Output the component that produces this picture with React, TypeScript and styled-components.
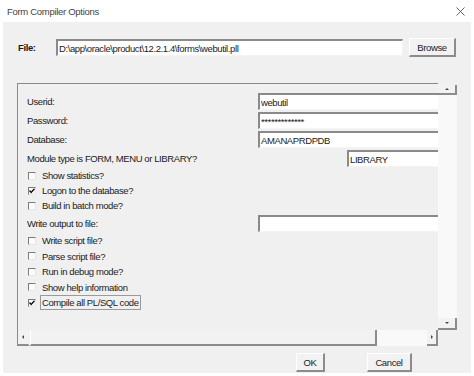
import React from 'react';
import styled, { createGlobalStyle } from 'styled-components';

const GlobalStyle = createGlobalStyle`
  html, body { margin: 0; padding: 0; background: #ffffff; }
  body { font-family: "Liberation Sans", Arial, sans-serif; }
`;

// Window chrome
const Window = styled.div`
  width: 474px; height: 376px; background: #ffffff;
  display: flex; flex-direction: column; overflow: hidden;
  color: #1b1b1b;
`;
const TitleBar = styled.div`
  height: 22px; flex-shrink: 0;
  display: flex; align-items: center; justify-content: space-between;
  padding: 0 9px 0 7px;
  font-size: 9.5px; letter-spacing: -0.3px; color: #444;
`;
const Body = styled.div`
  flex: 1; margin: 0 3px 3px 3px;
  background: #f0f0f0;
  padding: 16px 14px 0 14px;
  display: flex; flex-direction: column;
  font-size: 9.5px; letter-spacing: -0.4px;
`;

// File row
const FileRow = styled.div`
  display: flex; align-items: center; height: 19px;
`;
const FileLabel = styled.span`
  width: 38px; font-weight: bold; padding-left: 1px;
`;
const Sunken = styled.div<{ $width: number }>`
  width: ${({ $width }) => $width}px; height: 17px; flex-shrink: 0;
  box-sizing: border-box; background: #ffffff;
  border-top: 2px solid #8a8a8a; border-left: 2px solid #8a8a8a;
  border-right: 1px solid #f4f4f4; border-bottom: 1px solid #f4f4f4;
  display: flex; align-items: center; padding-left: 1px;
  white-space: nowrap; overflow: hidden;
`;
const Button = styled.div<{ $width: number }>`
  width: ${({ $width }) => $width}px; height: 19px; box-sizing: border-box;
  background: #f2f2f2;
  border-top: 1px solid #ffffff; border-left: 1px solid #ffffff;
  border-right: 2px solid #8c8c8c; border-bottom: 2px solid #8c8c8c;
  display: flex; align-items: center; justify-content: center;
`;

// Scroll panel
const Panel = styled.div`
  margin-top: 26px; width: 440px;
  display: grid; grid-template-columns: 421px 19px; grid-template-rows: 247px 16px;
`;
const Content = styled.div`
  box-sizing: border-box; overflow: hidden;
  border-top: 1px solid #8a8a8a; border-left: 1px solid #8a8a8a;
  padding: 8px 0 0 9px;
  display: flex; flex-direction: column;
`;
const FieldRow = styled.div<{ $inputAt?: number; $h?: number }>`
  height: ${({ $h }) => $h ?? 19}px; display: grid;
  grid-template-columns: ${({ $inputAt }) => $inputAt ?? 231}px 200px;
  align-items: center;
`;
const CheckRow = styled.div<{ $h?: number }>`
  height: ${({ $h }) => $h ?? 15}px;
  display: flex; align-items: center; padding-left: 1px;
`;
const Box = styled.span`
  width: 8px; height: 8px; box-sizing: border-box; background: #fbfbfb;
  border-top: 1px solid #7c7c7c; border-left: 1px solid #7c7c7c;
  border-right: 1px solid #e6e6e6; border-bottom: 1px solid #e6e6e6;
  margin-right: 5px; display: inline-flex; align-items: center; justify-content: center;
`;
const CheckText = styled.span<{ $focus?: boolean }>`
  padding: 1px 1px;
  border: 1px solid ${({ $focus }) => ($focus ? '#9a9a9a' : 'transparent')};
  margin-left: -1px;
`;

const VScroll = styled.div`
  display: flex; flex-direction: column; padding-top: 2px; background: #f0f0f0;
`;
const Track = styled.div`
  flex: 1; background: #f9f9f9;
`;
const Arrow = styled.div<{ $w: number; $h: number; $flat?: boolean }>`
  width: ${({ $w }) => $w}px; height: ${({ $h }) => $h}px; flex-shrink: 0;
  box-sizing: border-box; background: #f2f2f2;
  border-right: 2px solid ${({ $flat }) => ($flat ? '#f2f2f2' : '#8c8c8c')};
  border-bottom: 2px solid #8c8c8c;
  display: flex; align-items: center; justify-content: center;
`;
const HScroll = styled.div`
  display: flex; border-left: 1px solid #8a8a8a; box-sizing: border-box;
`;
const Thumb = styled.div`
  width: 347px; box-sizing: border-box; background: #f2f2f2;
  border-left: 1px solid #ffffff;
  border-right: 2px solid #8c8c8c; border-bottom: 2px solid #8c8c8c;
`;
const Corner = styled.div`
  background: #f0f0f0;
`;

const ButtonRow = styled.div`
  display: flex; justify-content: flex-end; gap: 42px;
  margin-top: 7px; padding-right: 45px;
`;

const Check = () => (
  <svg width="6" height="6" viewBox="0 0 6 6">
    <polyline points="0.5,2.5 2.2,4.5 5.5,0.8" fill="none" stroke="#111" strokeWidth="1.4" />
  </svg>
);
const Tri = ({ dir }: { dir: 'up' | 'down' | 'left' | 'right' }) => {
  const pts = {
    up: '0,3 2,1 4,3', down: '0,1 2,3 4,1', left: '3,0 1,2 3,4', right: '1,0 3,2 1,4',
  }[dir];
  return (
    <svg width="4" height="4" viewBox="0 0 4 4">
      <polygon points={pts} fill="#444" />
    </svg>
  );
};

const Checkbox = ({ label, checked, focus, h }: { label: string; checked?: boolean; focus?: boolean; h?: number }) => (
  <CheckRow $h={h}>
    <Box>{checked && <Check />}</Box>
    <CheckText $focus={focus}>{label}</CheckText>
  </CheckRow>
);

export default function App() {
  return (
    <Window>
      <GlobalStyle />
      <TitleBar>
        <span>Form Compiler Options</span>
        <svg width="9" height="9" viewBox="0 0 9 9">
          <path d="M0.5 0.5 L8.5 8.5 M8.5 0.5 L0.5 8.5" stroke="#555" strokeWidth="0.9" />
        </svg>
      </TitleBar>
      <Body>
        <FileRow>
          <FileLabel>File:</FileLabel>
          <Sunken $width={347}>D:\app\oracle\product\12.2.1.4\forms\webutil.pll</Sunken>
          <span style={{ width: 6 }} />
          <Button $width={47}>Browse</Button>
        </FileRow>

        <Panel>
          <Content>
            <FieldRow>
              <span>Userid:</span>
              <Sunken $width={200}>webutil</Sunken>
            </FieldRow>
            <FieldRow>
              <span>Password:</span>
              <Sunken $width={200}>*************</Sunken>
            </FieldRow>
            <FieldRow>
              <span>Database:</span>
              <Sunken $width={200}>AMANAPRDPDB</Sunken>
            </FieldRow>
            <FieldRow $inputAt={320}>
              <span>Module type is FORM, MENU or LIBRARY?</span>
              <Sunken $width={120}>LIBRARY</Sunken>
            </FieldRow>
            <Checkbox label="Show statistics?" />
            <Checkbox label="Logon to the database?" checked />
            <Checkbox label="Build in batch mode?" />
            <FieldRow $h={20}>
              <span>Write output to file:</span>
              <Sunken $width={200} />
            </FieldRow>
            <Checkbox label="Write script file?" h={15.5} />
            <Checkbox label="Parse script file?" h={15.5} />
            <Checkbox label="Run in debug mode?" h={15.5} />
            <Checkbox label="Show help information" h={15.5} />
            <Checkbox label="Compile all PL/SQL code" checked focus h={15.5} />
          </Content>
          <VScroll>
            <Arrow $w={19} $h={10}><Tri dir="up" /></Arrow>
            <Track />
            <Arrow $w={19} $h={12}><Tri dir="down" /></Arrow>
          </VScroll>
          <HScroll>
            <Arrow $w={12} $h={16} $flat><Tri dir="left" /></Arrow>
            <Thumb />
            <Track />
            <Arrow $w={11} $h={16}><Tri dir="right" /></Arrow>
          </HScroll>
          <Corner />
        </Panel>

        <ButtonRow>
          <Button $width={29}>OK</Button>
          <Button $width={45}>Cancel</Button>
        </ButtonRow>
      </Body>
    </Window>
  );
}
